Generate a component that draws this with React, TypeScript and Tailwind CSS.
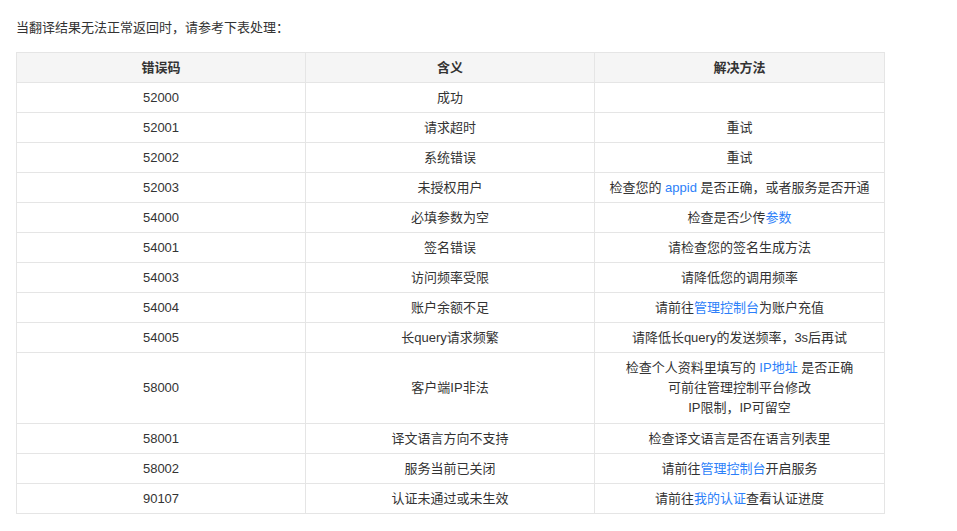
import React from "react";

const L = ({ children }: { children: React.ReactNode }) => (
  <span className="text-[#2d7ff9]">{children}</span>
);

type Row = { code: string; meaning: string; solution: React.ReactNode; tall?: boolean };

const rows: Row[] = [
  { code: "52000", meaning: "成功", solution: "" },
  { code: "52001", meaning: "请求超时", solution: "重试" },
  { code: "52002", meaning: "系统错误", solution: "重试" },
  {
    code: "52003",
    meaning: "未授权用户",
    solution: (
      <>
        检查您的 <L>appid</L> 是否正确，或者服务是否开通
      </>
    ),
  },
  {
    code: "54000",
    meaning: "必填参数为空",
    solution: (
      <>
        检查是否少传<L>参数</L>
      </>
    ),
  },
  { code: "54001", meaning: "签名错误", solution: "请检查您的签名生成方法" },
  { code: "54003", meaning: "访问频率受限", solution: "请降低您的调用频率" },
  {
    code: "54004",
    meaning: "账户余额不足",
    solution: (
      <>
        请前往<L>管理控制台</L>为账户充值
      </>
    ),
  },
  { code: "54005", meaning: "长query请求频繁", solution: "请降低长query的发送频率，3s后再试" },
  {
    code: "58000",
    meaning: "客户端IP非法",
    tall: true,
    solution: (
      <>
        检查个人资料里填写的 <L>IP地址</L> 是否正确
        <br />
        可前往管理控制平台修改
        <br />
        IP限制，IP可留空
      </>
    ),
  },
  { code: "58001", meaning: "译文语言方向不支持", solution: "检查译文语言是否在语言列表里" },
  {
    code: "58002",
    meaning: "服务当前已关闭",
    solution: (
      <>
        请前往<L>管理控制台</L>开启服务
      </>
    ),
  },
  {
    code: "90107",
    meaning: "认证未通过或未生效",
    solution: (
      <>
        请前往<L>我的认证</L>查看认证进度
      </>
    ),
  },
];

export default function App() {
  const font = {
    fontFamily: '"Liberation Sans", Arial, "Noto Sans CJK SC", sans-serif',
  };
  return (
    <div className="w-[957px] h-[531px] bg-white text-[#333] text-[13px]" style={font}>
      <div className="pt-[18px] pl-4">
        <p className="leading-[20px] h-[20px]">当翻译结果无法正常返回时，请参考下表处理：</p>
        <table className="mt-[14px] w-[868px] border-collapse table-fixed text-center">
          <colgroup>
            <col className="w-[289px]" />
            <col className="w-[289px]" />
            <col className="w-[290px]" />
          </colgroup>
          <thead>
            <tr className="bg-[#f5f5f5]">
              <th className="border border-[#e5e5e5] h-[30px] py-0 font-bold leading-[20px]">错误码</th>
              <th className="border border-[#e5e5e5] h-[30px] py-0 font-bold leading-[20px]">含义</th>
              <th className="border border-[#e5e5e5] h-[30px] py-0 font-bold leading-[20px]">解决方法</th>
            </tr>
          </thead>
          <tbody>
            {rows.map((r) => (
              <tr key={r.code}>
                <td className={`border border-[#e5e5e5] h-[30px] leading-[20px] ${r.tall ? "py-[5px]" : "py-[4px]"}`}>{r.code}</td>
                <td className={`border border-[#e5e5e5] h-[30px] leading-[20px] ${r.tall ? "py-[5px]" : "py-[4px]"}`}>{r.meaning}</td>
                <td className={`border border-[#e5e5e5] h-[30px] leading-[20px] ${r.tall ? "py-[5px]" : "py-[4px]"}`}>{r.solution}</td>
              </tr>
            ))}
          </tbody>
        </table>
      </div>
    </div>
  );
}
